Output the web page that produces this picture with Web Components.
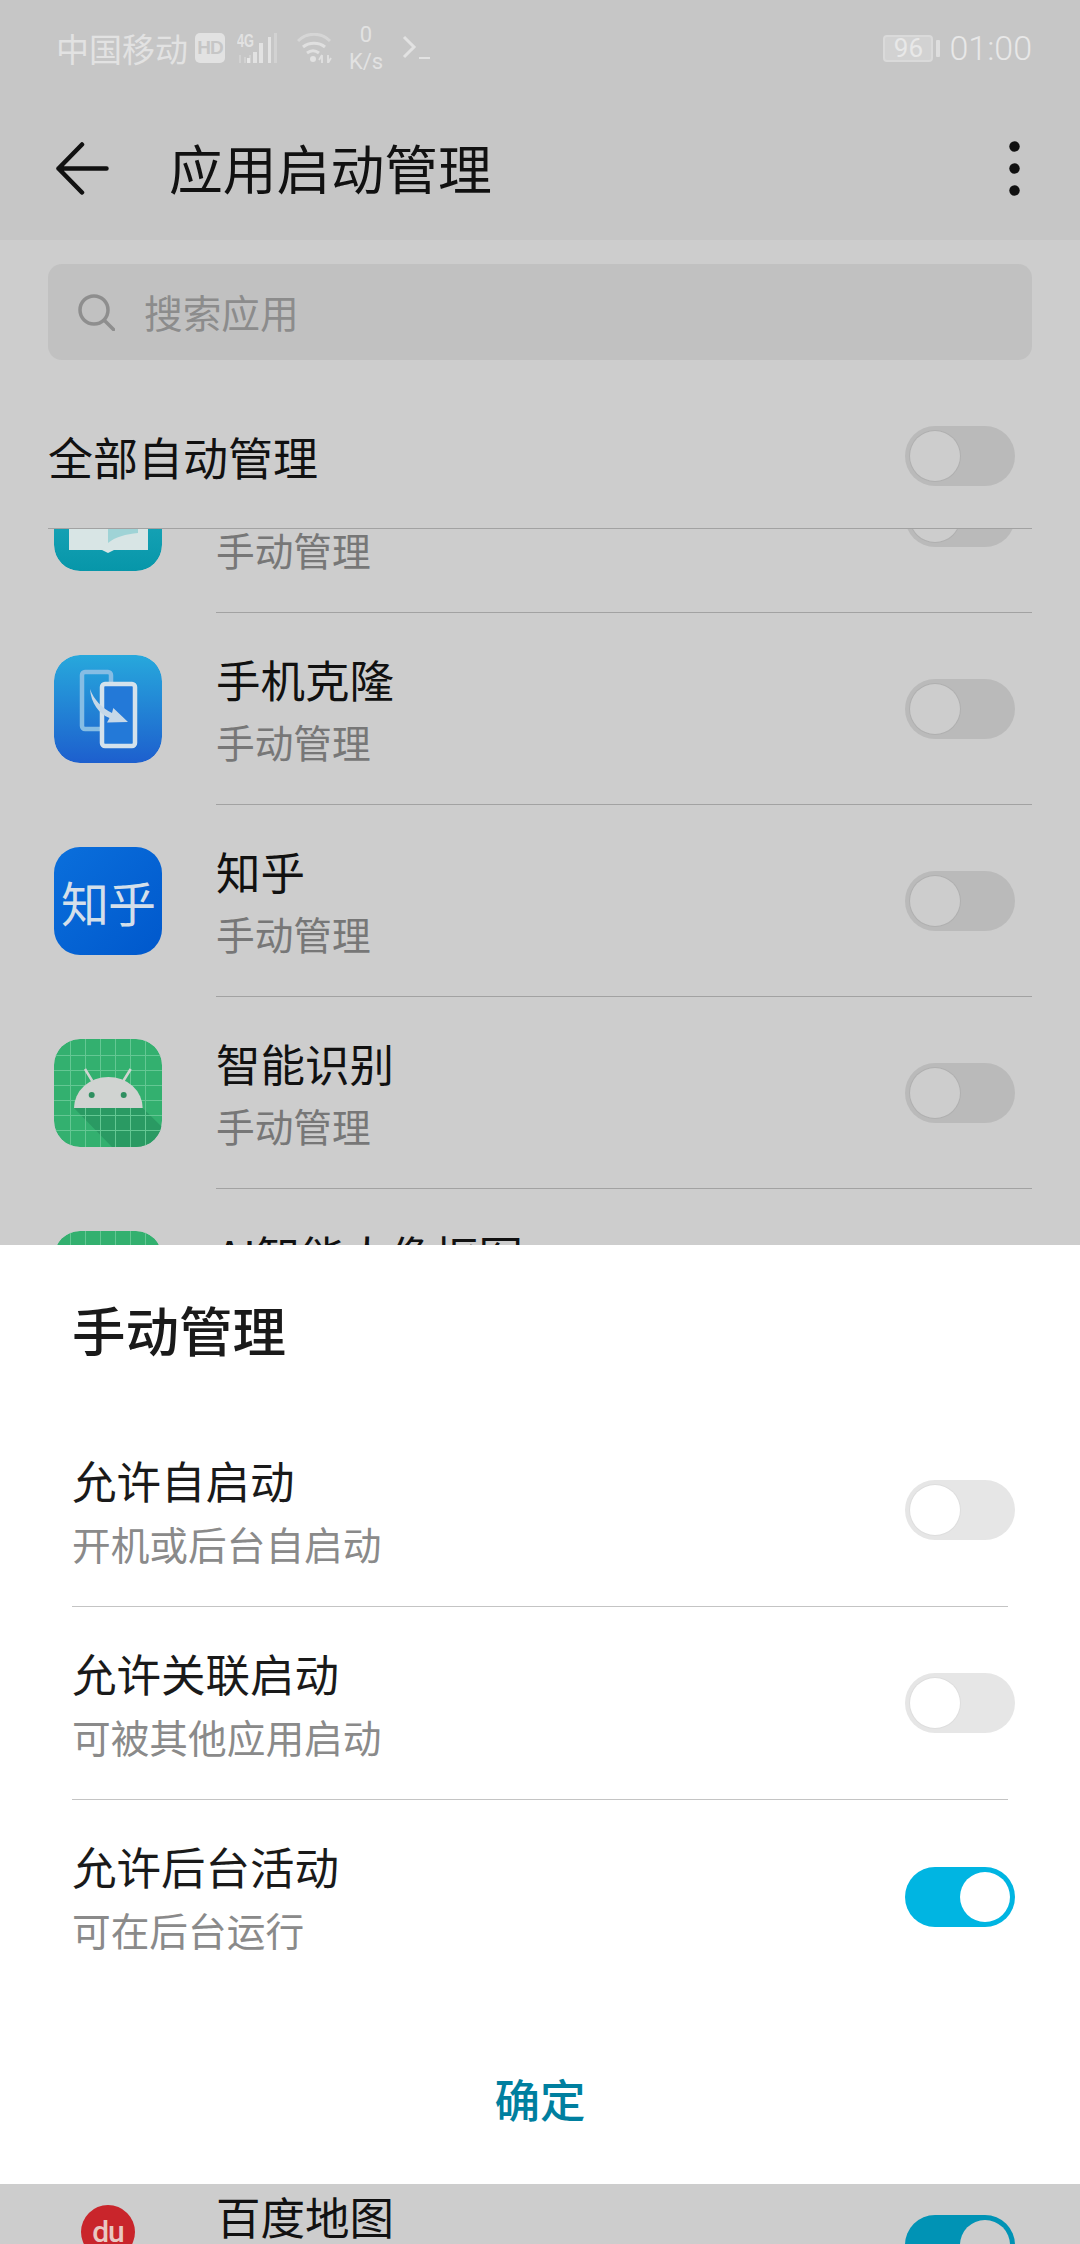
<!DOCTYPE html>
<html lang="zh">
<head>
<meta charset="utf-8">
<style>
  html, body { margin: 0; background: #cdcdcd; }
  body { font-family: "Noto Sans CJK SC", "Liberation Sans", sans-serif; }
</style>
</head>
<body>
<start-screen></start-screen>
<script>
const FONT = `"Noto Sans CJK SC", "Liberation Sans", sans-serif`;
const GRID = `M16.500 0v108M31.500 0v108M46.500 0v108M61.500 0v108M76.500 0v108M91.500 0v108M0 16.500h108M0 31.500h108M0 46.500h108M0 61.500h108M0 76.500h108M0 91.500h108`;

class ToggleSwitch extends HTMLElement {
    constructor() {
        super();
        this.attachShadow({ mode: 'open' });
        this.shadowRoot.innerHTML = `
            <style>
                :host { display: flex; flex: none; width: 110px; height: 60px; box-sizing: border-box;
                    border-radius: 30px; background: var(--off, #bababa); padding: 5px; }
                :host([on]) { background: var(--on, #00b5e2); justify-content: flex-end; }
                i { display: block; width: 50px; height: 50px; border-radius: 50%; background: var(--knob, #cdcdcd);
                    box-shadow: 0 0 0 1px var(--ring, #b0b0b0); }
                :host([on]) i { box-shadow: none; }
            </style>
            <i></i>`;
    }
}
customElements.define('toggle-switch', ToggleSwitch);

class StatusBar extends HTMLElement {
    constructor() {
        super();
        this.attachShadow({ mode: 'open' });
        this.shadowRoot.innerHTML = `
            <style>
                :host { display: flex; align-items: center; height: 96px; box-sizing: border-box;
                    padding: 0 48px 0 56px; background: #c6c6c6; color: #e2e2e2; font-family: ${FONT}; }
                .carrier { font-size: 33px; line-height: 44px; margin-right: 7px; }
                .hd { flex: none; width: 30px; height: 30px; border-radius: 5px; background: #e2e2e2; color: #c6c6c6;
                    font: bold 19px/30px "Liberation Sans", sans-serif; text-align: center; letter-spacing: -1px; }
                .net { display: flex; flex-direction: column; align-items: center; width: 40px;
                    font: 22px/27px "Roboto", sans-serif; margin: 0 16px 0 14px; }
                svg { display: block; flex: none; }
                .end { margin-left: auto; display: flex; align-items: center; }
                .time { font: 300 34px/44px "Roboto", sans-serif; margin-left: 9px; color: #e8e8e8; }
                .batt { display: flex; align-items: center; justify-content: center; box-sizing: border-box;
                    width: 50px; height: 27px; border: 2px solid #dadada; border-radius: 4px; background: #d2d2d2;
                    font: 26px/23px "Roboto", sans-serif; color: #e8e8e8; }
                .nub { width: 4px; height: 17px; background: #dedede; margin-left: 3px; border-radius: 1px; }
            </style>
            <span class="carrier">中国移动</span>
            <span class="hd">HD</span>
            <svg width="49" height="30" viewBox="0 0 49 30" style="margin-left:12px">
                <text x="0" y="14" font-family="Liberation Sans" font-weight="bold" font-size="18" textLength="17" lengthAdjust="spacingAndGlyphs" fill="#e2e2e2">4G</text>
                <path d="M3 22v8M8 24v6M13 22v8" stroke="#d2d2d2" stroke-width="2"/>
                <rect x="10" y="25" width="3" height="5" fill="#e8e8e8"/><rect x="16" y="19" width="4" height="11" fill="#e2e2e2"/>
                <rect x="22" y="10" width="4" height="20" fill="#e2e2e2"/><rect x="31" y="4" width="3" height="26" fill="#e2e2e2"/>
                <rect x="37" y="0" width="3" height="30" fill="#d2d2d2"/></svg>
            <svg width="35" height="30" viewBox="0 0 35 30" style="margin-left:11px" fill="none" stroke="#e0e0e0" stroke-width="3">
                <path d="M1 8c9-9 23-9 32 0" stroke="#d6d6d6"/><path d="M6 14c6-5 16-5 22 0"/><path d="M10 20c4-3 8-3 12 0"/>
                <circle cx="16" cy="26" r="3" fill="#e2e2e2" stroke="none"/>
                <path d="M25 22v8M31 22v8M22 27l3-5M34 25l-3 5" stroke-width="1.800"/></svg>
            <span class="net"><span>0</span><span>K/s</span></span>
            <svg width="29" height="26" viewBox="0 0 29 26" fill="none" stroke="#e2e2e2" stroke-width="3"><path d="M2 2l10 10L2 22"/><path d="M17 23h11" stroke-width="2"/></svg>
            <span class="end">
                <span class="batt">96</span><span class="nub"></span>
                <span class="time">01:00</span>
            </span>`;
    }
}
customElements.define('status-bar', StatusBar);

class AppBar extends HTMLElement {
    constructor() {
        super();
        this.attachShadow({ mode: 'open' });
        this.shadowRoot.innerHTML = `
            <style>
                :host { display: flex; align-items: center; height: 144px; box-sizing: border-box;
                    padding: 0 60px 0 56px; background: #c6c6c6; color: #111; font-family: ${FONT}; }
                h1 { margin: -2px 0 0 60px; font-size: 53.800px; line-height: 72px; font-weight: 400; flex: 1; }
                svg { display: block; flex: none; }
            </style>
            <svg width="53" height="53" viewBox="0 0 53 53" fill="none" stroke="#111" stroke-width="4.500" stroke-linecap="round" stroke-linejoin="round">
                <path d="M26 2.500L2.500 26.500l23.500 24M2.500 26.500h48"/></svg>
            <h1>应用启动管理</h1>
            <svg width="11" height="55" viewBox="0 0 11 55" fill="#111"><circle cx="5.500" cy="5.500" r="5.200"/><circle cx="5.500" cy="27.500" r="5.200"/><circle cx="5.500" cy="49.500" r="5.200"/></svg>`;
    }
}
customElements.define('app-bar', AppBar);

class SearchBox extends HTMLElement {
    constructor() {
        super();
        this.attachShadow({ mode: 'open' });
        this.shadowRoot.innerHTML = `
            <style>
                :host { display: flex; align-items: center; height: 96px; margin: 24px 48px 0; padding-left: 30px;
                    box-sizing: border-box; background: #c1c1c1; border-radius: 14px; color: #8c8c8c;
                    font-family: ${FONT}; font-size: 38.700px; }
                svg { display: block; margin-right: 29px; }
                span { margin-top: -2px; }
            </style>
            <svg width="37" height="37" viewBox="0 0 37 37" fill="none" stroke="#8e8e8e" stroke-width="3.500" stroke-linecap="round">
                <circle cx="16" cy="16" r="14"/><path d="M26.500 26.500l9 9"/></svg>
            <span><slot></slot></span>`;
    }
}
customElements.define('search-box', SearchBox);

class AppRow extends HTMLElement {
    constructor() {
        super();
        this.attachShadow({ mode: 'open' });
        this.shadowRoot.innerHTML = `
            <style>
                :host { display: flex; align-items: center; height: 192px; box-sizing: border-box;
                    padding: 0 48px 0 54px; font-family: ${FONT}; }
                .icon { flex: none; width: 108px; height: 108px; margin-right: 54px; display: flex; align-items: center; justify-content: center; }
                .body { flex: 1; align-self: stretch; display: flex; align-items: center; justify-content: space-between;
                    border-bottom: 1px solid #a2a2a2; box-sizing: border-box; padding-right: 17px; }
                :host([last]) .body { border-bottom: 0; }
                .title { font-size: 44.500px; line-height: 54px; min-height: 54px; color: #111; }
                .sub { font-size: 38.700px; line-height: 48px; color: #777; margin-top: 11px; }
            </style>
            <div class="icon"><slot name="icon"></slot></div>
            <div class="body">
                <div>
                    <div class="title"></div>
                    <div class="sub">手动管理</div>
                </div>
                <toggle-switch></toggle-switch>
            </div>`;
    }
    connectedCallback() {
        this.shadowRoot.querySelector('.title').textContent = this.getAttribute('title') || '';
        if (this.hasAttribute('on')) {
            const sw = this.shadowRoot.querySelector('toggle-switch');
            sw.setAttribute('on', '');
            sw.style.setProperty('--on', '#0093b5');
        }
    }
}
customElements.define('app-row', AppRow);

class AllRow extends HTMLElement {
    constructor() {
        super();
        this.attachShadow({ mode: 'open' });
        this.shadowRoot.innerHTML = `
            <style>
                :host { display: flex; align-items: center; justify-content: space-between; height: 169px; margin: 0 48px;
                    padding: 24px 17px 0 0; box-sizing: border-box; border-bottom: 1px solid #a2a2a2;
                    font-family: ${FONT}; font-size: 45px; color: #111; position: relative; background: #cdcdcd; }
            </style>
            <span><slot></slot></span>
            <toggle-switch></toggle-switch>`;
    }
}
customElements.define('all-row', AllRow);

class SheetRow extends HTMLElement {
    constructor() {
        super();
        this.attachShadow({ mode: 'open' });
        this.shadowRoot.innerHTML = `
            <style>
                :host { display: flex; align-items: center; justify-content: space-between; height: 193px;
                    margin-right: 24px; box-sizing: border-box; border-bottom: 1px solid #c4c4c4; font-family: ${FONT}; }
                :host([last]) { border-bottom: 0; }
                .text { padding-bottom: 3px; }
                .title { font-size: 44.500px; line-height: 58px; color: #1a1a1a; }
                .sub { font-size: 38.700px; line-height: 48px; color: #8a8a8a; margin-top: 10px; }
                toggle-switch { margin-right: -7px; --off: #e6e6e6; --knob: #fff; --ring: #dedede; --on: #00b5e2; }
            </style>
            <div class="text">
                <div class="title"></div>
                <div class="sub"></div>
            </div>
            <toggle-switch></toggle-switch>`;
    }
    connectedCallback() {
        this.shadowRoot.querySelector('.title').textContent = this.getAttribute('title');
        this.shadowRoot.querySelector('.sub').textContent = this.getAttribute('sub');
        if (this.hasAttribute('on')) this.shadowRoot.querySelector('toggle-switch').setAttribute('on', '');
    }
}
customElements.define('sheet-row', SheetRow);

class ManageSheet extends HTMLElement {
    constructor() {
        super();
        this.attachShadow({ mode: 'open' });
        this.shadowRoot.innerHTML = `
            <style>
                :host { position: absolute; left: 0; right: 0; top: 1245px; height: 939px; background: #fff;
                    display: flex; flex-direction: column; box-sizing: border-box; padding: 0 48px 0 72px; font-family: ${FONT}; }
                h2 { margin: 0; font-size: 53.500px; font-weight: 500; line-height: 70px; padding-top: 49px; color: #1a1a1a; height: 169px; box-sizing: border-box; }
                button { all: unset; margin: auto -48px 0 -72px; height: 120px; padding-bottom: 26px; display: flex; align-items: center; justify-content: center;
                    color: #007f9f; font-size: 45.500px; font-weight: 500; }
            </style>
            <h2>手动管理</h2>
            <slot></slot>
            <button>确定</button>`;
    }
}
customElements.define('manage-sheet', ManageSheet);

class StartScreen extends HTMLElement {
    constructor() {
        super();
        this.attachShadow({ mode: 'open' });
        this.shadowRoot.innerHTML = `
            <style>
                :host { display: block; position: relative; width: 1080px; height: 2244px; overflow: hidden; background: #cdcdcd; }
                .list { height: 1715px; overflow: hidden; }
                .rows { margin-top: -108px; }
                .gap { height: 768px; }
                .tile { display: block; border-radius: 26px; width: 108px; height: 108px; overflow: hidden; }
                svg { display: block; }
                .du { width: 54px; height: 54px; margin-bottom: 27px; border-radius: 50%; background: #c9252b; color: #e8c8c2;
                    font: 500 30px/54px "Roboto", sans-serif; text-align: center; letter-spacing: -1px; }
            </style>
            <status-bar></status-bar>
            <app-bar></app-bar>
            <search-box>搜索应用</search-box>
            <all-row>全部自动管理</all-row>
            <div class="list"><div class="rows">
                <app-row>
                    <svg slot="icon" class="tile" viewBox="0 0 108 108">
                        <defs><linearGradient id="b" x1="0" y1="0" x2="0" y2="1"><stop offset="0" stop-color="#27b1c4"/><stop offset="1" stop-color="#0796a9"/></linearGradient></defs>
                        <rect width="108" height="108" rx="26" fill="url(#b)"/>
                        <path d="M15 28h79v59H60l-6 3-6-3H15z" fill="#d8e5e5"/>
                        <path d="M54 40c9-8 20-11 30-12v42c-12 1-23 4-30 10z" fill="#9fd3d6"/>
                    </svg>
                </app-row>
                <app-row title="手机克隆">
                    <svg slot="icon" class="tile" viewBox="0 0 108 108">
                        <defs><linearGradient id="c" x1="0" y1="0" x2="0" y2="1"><stop offset="0" stop-color="#27a8dc"/><stop offset="1" stop-color="#1d5fce"/></linearGradient></defs>
                        <rect width="108" height="108" rx="26" fill="url(#c)"/>
                        <rect x="28" y="17" width="29" height="57" rx="3" fill="none" stroke="#86bde4" stroke-width="4.500"/>
                        <rect x="48" y="29" width="33" height="62" rx="3" fill="#2379d8" stroke="#d4e2ec" stroke-width="4.500"/>
                        <path d="M36 34C40 45 48 53 58 58L59.300 53 74 67 53 67.500 55.500 63C45 59 37 48 36 34z" fill="#c6d8e8"/>
                    </svg>
                </app-row>
                <app-row title="知乎">
                    <div slot="icon" class="tile" style="background:linear-gradient(135deg,#0a6fdc,#0058cc);color:#d3dfea;font:400 48px/108px 'Noto Sans CJK SC',sans-serif;text-align:center;letter-spacing:-1px">知乎</div>
                </app-row>
                <app-row title="智能识别">
                    <svg slot="icon" class="tile" viewBox="0 0 108 108">
                        <rect width="108" height="108" rx="26" fill="#33b06f"/>
                        <path d="M20 69h68.700l19.300 19v20H58z" fill="#2a9a63"/>
                        <path d="${GRID}" stroke="#64c793" stroke-width="1"/>
                        <path d="M31 30l7.300 12M76.700 30l-7.400 12" stroke="#cfd4d1" stroke-width="2.500"/>
                        <path d="M20 69a34.350 31 0 0 1 68.700 0z" fill="#d0d3d1"/>
                        <circle cx="37.700" cy="56" r="3" fill="#2f8f60"/><circle cx="69.700" cy="56" r="3" fill="#2f8f60"/>
                    </svg>
                </app-row>
                <app-row title="AI智能人像抠图">
                    <svg slot="icon" class="tile" viewBox="0 0 108 108">
                        <rect width="108" height="108" rx="26" fill="#33b06f"/>
                        <path d="${GRID}" stroke="#64c793" stroke-width="1"/>
                    </svg>
                </app-row>
                <div class="gap"></div>
                <app-row title="百度地图" on last>
                    <div slot="icon" class="du">du</div>
                </app-row>
            </div></div>
            <manage-sheet>
                <sheet-row title="允许自启动" sub="开机或后台自启动"></sheet-row>
                <sheet-row title="允许关联启动" sub="可被其他应用启动"></sheet-row>
                <sheet-row title="允许后台活动" sub="可在后台运行" on last></sheet-row>
            </manage-sheet>`;
    }
}
customElements.define('start-screen', StartScreen);
</script>
</body>
</html>
